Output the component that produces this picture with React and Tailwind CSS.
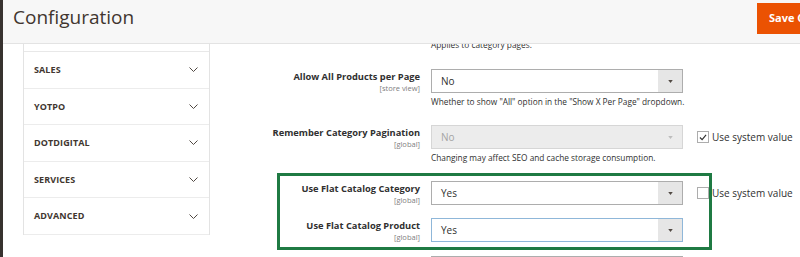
const SECTIONS = ["SALES", "YOTPO", "DOTDIGITAL", "SERVICES", "ADVANCED"];

function Chevron() {
  return (
    <svg width="9" height="5" viewBox="0 0 9 5" className="text-[#514943]">
      <path d="M0.5 0.5 L4.5 4.5 L8.5 0.5" fill="none" stroke="currentColor" strokeWidth="1" />
    </svg>
  );
}

function Select({ value, disabled, focused }) {
  const border = disabled ? "border-[#d6d6d6]" : focused ? "border-[#8fb7d9]" : "border-[#adadad]";
  return (
    <div className={`w-[252px] h-6 flex border ${border} ${disabled ? "bg-[#ececec]" : "bg-white"}`}>
      <div className={`flex-1 pl-[9px] text-[10px] leading-[22px] ${disabled ? "text-[#a4a4a4]" : "text-[#303030]"}`}>
        {value}
      </div>
      <div className={`w-[24px] flex items-center justify-center ${disabled ? "bg-[#ececec]" : "bg-[#e6e6e6]"}`}>
        <svg width="5" height="3" viewBox="0 0 6 4">
          <path d="M0 0 L6 0 L3 4 Z" fill={disabled ? "#bdbdbd" : "#514943"} />
        </svg>
      </div>
    </div>
  );
}

function Check({ checked }) {
  return (
    <div className="flex items-center gap-[3px] ml-[14px] h-6 shrink-0">
      <div className="w-[12px] h-[12px] border border-[#adadad] bg-white flex items-center justify-center">
        {checked && (
          <svg width="8" height="7" viewBox="0 0 9 8">
            <path d="M1 4 L3.5 6.5 L8 1" fill="none" stroke="#303030" strokeWidth="1.3" />
          </svg>
        )}
      </div>
      <span className="text-[10px] text-[#303030] whitespace-nowrap">Use system value</span>
    </div>
  );
}

function Row({ label, scope, value, disabled, focused, check, note }) {
  return (
    <div className="flex">
      <div className="w-[140px] shrink-0 flex flex-col items-end pt-[1px]">
        <div className="text-[9.3px] font-bold text-[#303030] leading-[13px] whitespace-nowrap">{label}</div>
        <div className="text-[7.5px] text-[#808080] leading-[10px] whitespace-nowrap">{scope}</div>
      </div>
      <div className="ml-[11px] shrink-0">
        <Select value={value} disabled={disabled} focused={focused} />
        {note && <div className="text-[8.3px] text-[#303030] leading-[14px] mt-[2px] whitespace-nowrap">{note}</div>}
      </div>
      {check !== undefined && <Check checked={check} />}
    </div>
  );
}

export default function App() {
  return (
    <div
      className="w-[800px] h-[257px] overflow-hidden bg-white flex"
      style={{ fontFamily: '"Open Sans", "Noto Sans", sans-serif' }}
    >
      <div className="w-[3px] h-full bg-[#37322f] shrink-0" />
      <div className="flex-1 flex flex-col relative">
        <div className="h-[44px] bg-[#f7f7f7] border-b border-[#e3e3e3] flex justify-between items-start shrink-0 relative z-10">
          <h1 className="text-[19px] text-[#41362f] leading-none mt-[8px] ml-[10px]">Configuration</h1>
          <div className="mt-[3px] h-[31px] bg-[#eb5202] pl-[12px] pr-[8px] w-[103px] -mr-[60px] shrink-0 flex items-center text-white text-[11px] font-bold whitespace-nowrap">
            Save Config
          </div>
        </div>
        <div className="flex flex-1 overflow-hidden">
          <div className="ml-[20px] w-[187px] shrink-0 border-x border-[#e3e3e3] self-start">
            <div className="h-[8px] border-b border-[#e8e8e8]" />
            {SECTIONS.map((s) => (
              <div key={s} className="h-[36.6px] border-b border-[#ececec] flex items-center justify-between pl-[10px] pr-[11px]">
                <span className="text-[9px] font-bold tracking-[0.1px] text-[#41362f]">{s}</span>
                <Chevron />
              </div>
            ))}
          </div>
          <div className="ml-[68px] flex flex-col">
            <div className="-mt-[6px] ml-[153px] text-[8.3px] leading-[14px] text-[#303030] whitespace-nowrap">Applies to category pages.</div>
            <div className="mt-[17px] px-[2px]">
              <Row
                label="Allow All Products per Page"
                scope="[store view]"
                value="No"
                note={'Whether to show "All" option in the "Show X Per Page" dropdown.'}
              />
            </div>
            <div className="mt-[16px] px-[2px]">
              <Row
                label="Remember Category Pagination"
                scope="[global]"
                value="No"
                disabled
                check
                note="Changing may affect SEO and cache storage consumption."
              />
            </div>
            <div className="mt-[8px] -mx-[1px] w-[435px] border-[3px] border-[#1f7a43] pt-[5px] pb-[5px] flex flex-col gap-[13px]">
              <Row label="Use Flat Catalog Category" scope="[global]" value="Yes" check={false} />
              <Row label="Use Flat Catalog Product" scope="[global]" value="Yes" focused />
            </div>
            <div className="mt-[6px] ml-[153px] w-[252px] h-6 border border-[#adadad]" />
          </div>
        </div>
      </div>
    </div>
  );
}
